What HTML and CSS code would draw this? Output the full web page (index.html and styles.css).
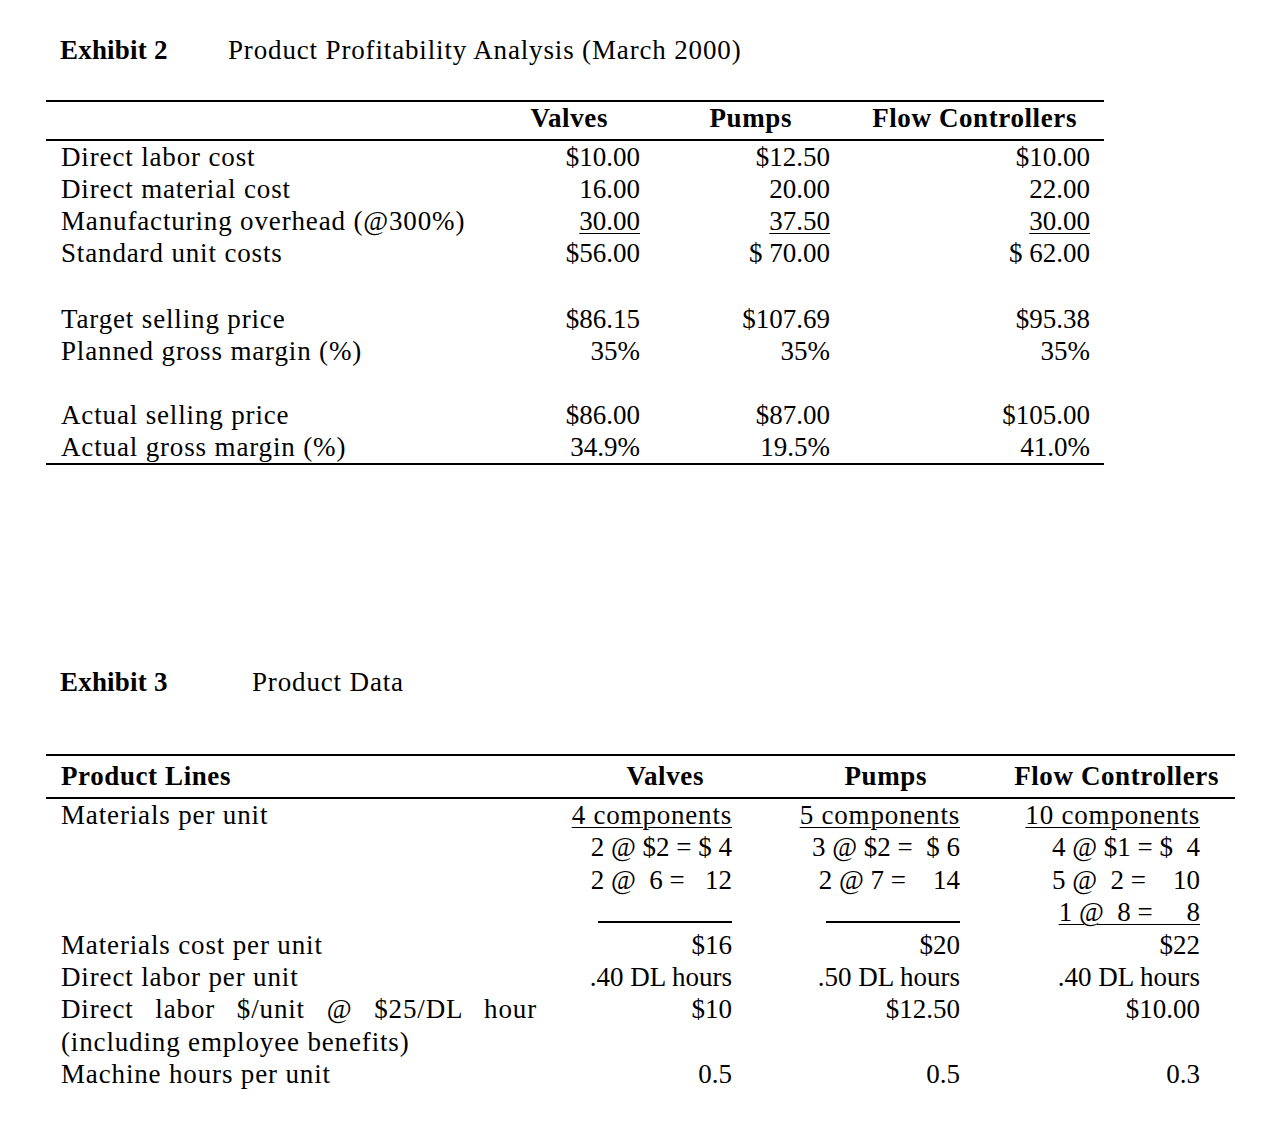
FILE: index.html
```html
<!DOCTYPE html>
<html>
<head>
<meta charset="utf-8">
<link rel="stylesheet" href="styles.css">
</head>
<body>
<div class="page">
  <section class="exhibit ex2">
    <div class="title">
      <span class="ex-label">Exhibit 2</span>
      <span class="ex-name">Product Profitability Analysis (March 2000)</span>
    </div>
    <div class="t2">
      <div class="r2 head">
        <div></div>
        <div class="num h-valves">Valves</div>
        <div class="num h-pumps">Pumps</div>
        <div class="num h-fc">Flow Controllers</div>
      </div>
      <div class="body2">
        <div class="r2"><div class="lbl">Direct labor cost</div><div class="num">$10.00</div><div class="num">$12.50</div><div class="num">$10.00</div></div>
        <div class="r2"><div class="lbl">Direct material cost</div><div class="num">16.00</div><div class="num">20.00</div><div class="num">22.00</div></div>
        <div class="r2"><div class="lbl">Manufacturing overhead (@300%)</div><div class="num"><u>30.00</u></div><div class="num"><u>37.50</u></div><div class="num"><u>30.00</u></div></div>
        <div class="r2"><div class="lbl">Standard unit costs</div><div class="num">$56.00</div><div class="num">$ 70.00</div><div class="num">$ 62.00</div></div>
        <div class="r2 gap"><div class="lbl">Target selling price</div><div class="num">$86.15</div><div class="num">$107.69</div><div class="num">$95.38</div></div>
        <div class="r2"><div class="lbl">Planned gross margin (%)</div><div class="num">35%</div><div class="num">35%</div><div class="num">35%</div></div>
        <div class="r2 gap"><div class="lbl">Actual selling price</div><div class="num">$86.00</div><div class="num">$87.00</div><div class="num">$105.00</div></div>
        <div class="r2"><div class="lbl">Actual gross margin (%)</div><div class="num">34.9%</div><div class="num">19.5%</div><div class="num">41.0%</div></div>
      </div>
    </div>
  </section>

  <section class="exhibit ex3">
    <div class="title">
      <span class="ex-label">Exhibit 3</span>
      <span class="ex-name ex-name3">Product Data</span>
    </div>
    <div class="t3">
      <div class="r3 head3">
        <div class="lbl bold">Product Lines</div>
        <div class="num h3-valves">Valves</div>
        <div class="num h3-pumps">Pumps</div>
        <div class="num h3-fc">Flow Controllers</div>
      </div>
      <div class="body3">
        <div class="r3">
          <div class="lbl">Materials per unit</div>
          <div class="num"><div class="comp"><u>4 components</u></div><div class="pre">2 @ $2 = $ 4</div><div class="pre">2 @  6 =   12</div><div class="pre"><span class="sep"></span></div></div>
          <div class="num"><div class="comp"><u>5 components</u></div><div class="pre">3 @ $2 =  $ 6</div><div class="pre">2 @ 7 =    14</div><div class="pre"><span class="sep"></span></div></div>
          <div class="num"><div class="comp"><u>10 components</u></div><div class="pre">4 @ $1 = $  4</div><div class="pre">5 @  2 =    10</div><div class="pre"><u>1 @  8 =     8</u></div></div>
        </div>
        <div class="r3"><div class="lbl">Materials cost per unit</div><div class="num">$16</div><div class="num">$20</div><div class="num">$22</div></div>
        <div class="r3"><div class="lbl">Direct labor per unit</div><div class="num">.40 DL hours</div><div class="num">.50 DL hours</div><div class="num">.40 DL hours</div></div>
        <div class="r3"><div class="lbl just">Direct labor $/unit @ $25/DL hour (including employee benefits)</div><div class="num">$10</div><div class="num">$12.50</div><div class="num">$10.00</div></div>
        <div class="r3"><div class="lbl">Machine hours per unit</div><div class="num">0.5</div><div class="num">0.5</div><div class="num">0.3</div></div>
      </div>
    </div>
  </section>
</div>
</body>
</html>
```

FILE: styles.css
```css
html, body {
  margin: 0;
  padding: 0;
  background: #ffffff;
  color: #000000;
}

body {
  font-family: "Liberation Serif", "Times New Roman", serif;
  font-size: 27px;
  line-height: 32px;
}

.page {
  padding: 34px 0 0 46px;
  width: 1189px;
}

.title {
  display: flex;
  align-items: baseline;
  padding-left: 14px;
  height: 32px;
}

.ex-label {
  font-weight: bold;
  letter-spacing: 0.2px;
  width: 168px;
}

.ex-name {
  letter-spacing: 0.85px;
}

.ex3 .ex-label {
  width: 192px;
}

/* Exhibit 2 */
.t2 {
  width: 1058px;
  margin-top: 34px;
  border-top: 2px solid #000;
  border-bottom: 2px solid #000;
}

.r2 {
  display: grid;
  grid-template-columns: 1fr 150px 190px 260px;
  padding: 0 14px 0 15px;
  height: 32px;
}

.r2.head {
  height: 37px;
  line-height: 32px;
  border-bottom: 2px solid #000;
  font-weight: bold;
  letter-spacing: 0.6px;
}

.r2.gap {
  margin-top: 34px;
}

.r2.gap + .r2 + .r2.gap {
  margin-top: 32px;
}

.lbl {
  white-space: nowrap;
  letter-spacing: 0.85px;
}

.num {
  text-align: right;
  white-space: nowrap;
}

.h-valves { padding-right: 32px; }
.h-pumps { padding-right: 38px; }
.h-fc { padding-right: 13px; }

u {
  text-decoration: underline;
  text-decoration-thickness: 1px;
  text-underline-offset: 3px;
}

/* Exhibit 3 */
.ex3 {
  margin-top: 201px;
}

.t3 {
  width: 1189px;
  margin-top: 56px;
  border-top: 2px solid #000;
}

.r3 {
  display: grid;
  grid-template-columns: 491px 195px 228px 240px;
  padding-right: 35px;
  line-height: 32.4px;
  align-items: start;
}

.r3 .lbl {
  padding-left: 15px;
}

.head3 {
  height: 41px;
  line-height: 40px;
  border-bottom: 2px solid #000;
  font-weight: bold;
  letter-spacing: 0.6px;
}

.head3 .lbl.bold {
  font-weight: bold;
  letter-spacing: 0.6px;
}

.h3-valves { padding-right: 28px; }
.h3-pumps { padding-right: 33px; }
.h3-fc { margin-right: -19px; }

.comp {
  letter-spacing: 0.8px;
}

.pre {
  white-space: pre;
  height: 32.4px;
}

.sep {
  display: inline-block;
  width: 134px;
  height: 2px;
  background: #000;
  vertical-align: -2px;
}

.lbl.just {
  white-space: normal;
  text-align: justify;
  width: 476px;
}
```
